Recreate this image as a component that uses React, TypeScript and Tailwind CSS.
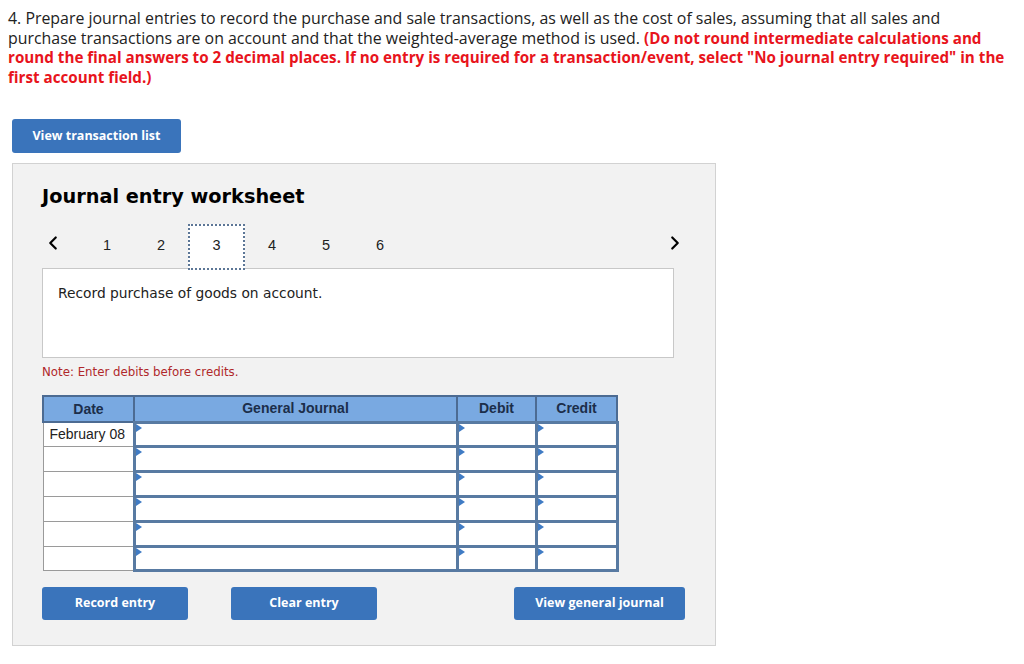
import { ChevronLeft, ChevronRight } from "lucide-react";

const steps = [1, 2, 3, 4, 5, 6];
const rows = ["February 08", "", "", "", "", ""];

function Cell({ w }: { w: string }) {
  return (
    <td className={`${w} relative border-[3px] border-[#587aa2] bg-white p-0`}>
      <span className="absolute left-0 top-0 h-0 w-0 border-y-[4px] border-l-[6px] border-y-transparent border-l-[#3f7bc4]" />
    </td>
  );
}

export default function App() {
  return (
    <div className="min-h-[664px] w-[1024px] bg-white pt-[9px] text-[#222]">
      <p className="whitespace-nowrap px-[8px] font-['Open_Sans',sans-serif] text-[15.9px] leading-[19.6px] text-[#222]">
        4. Prepare journal entries to record the purchase and sale transactions, as well as the cost of sales, assuming that all sales and
        <br />
        purchase transactions are on account and that the weighted-average method is used.{" "}
        <b className="text-[15.2px] font-bold text-[#e8141c]">(Do not round intermediate calculations and</b>
        <br />
        <b className="text-[15.2px] font-bold text-[#e8141c]">
          round the final answers to 2 decimal places. If no entry is required for a transaction/event, select "No journal entry required" in the
        </b>
        <br />
        <b className="text-[15.2px] font-bold text-[#e8141c]">first account field.)</b>
      </p>

      <div className="px-[12px] pt-[32px]">
        <button className="h-[34px] w-[169px] rounded-[3px] bg-[#3a74bb] font-['Open_Sans',sans-serif] text-[12.5px] font-bold text-white">
          View transaction list
        </button>

        <div className="mt-[10px] h-[483px] w-[704px] border border-[#d2d2d2] bg-[#f2f2f2] px-[29px] pt-[20px]">
          <h2 className="font-['DejaVu_Sans',sans-serif] text-[19.3px] font-bold leading-[26px] text-black">
            Journal entry worksheet
          </h2>

          <div className="mt-[14px] flex h-[46px] w-[632px] items-center font-['Liberation_Sans',sans-serif] text-[14.5px] text-[#222]">
            <ChevronLeft className="-mt-[8px] h-[22px] w-[22px] text-black" strokeWidth={2.4} />
            <div className="ml-[16px] flex">
              {steps.map((s) =>
                s === 3 ? (
                  <span
                    key={s}
                    className="relative z-10 flex h-[46px] w-[57px] items-center justify-center border-2 border-dotted border-[#5c7696] bg-white pb-[4px]"
                  >
                    {s}
                  </span>
                ) : (
                  <span key={s} className="flex h-[46px] w-[54px] items-center justify-center pb-[4px]">
                    {s}
                  </span>
                )
              )}
            </div>
            <ChevronRight className="-mt-[8px] ml-auto mr-[-12px] h-[22px] w-[22px] text-black" strokeWidth={2.4} />
          </div>

          <div className="-mt-[2px] h-[90px] w-[632px] border border-[#c8c8c8] bg-white px-[15px] pt-[14px] font-['DejaVu_Sans',sans-serif] text-[13.8px] text-[#222]">
            Record purchase of goods on account.
          </div>

          <p className="mt-[6px] font-['DejaVu_Sans',sans-serif] text-[11.8px] text-[#b0282a]">Note: Enter debits before credits.</p>

          <table className="mt-[13px] w-[574px] table-fixed border-collapse font-['Liberation_Sans',sans-serif] text-[14px]">
            <thead>
              <tr className="h-[26px] bg-[#79a9e1] font-bold text-[#1c2e4a]">
                <th className="w-[91px] border-2 border-[#4c6b92]">Date</th>
                <th className="w-[323px] border-2 border-[#4c6b92]">General Journal</th>
                <th className="w-[79px] border-2 border-[#4c6b92]">Debit</th>
                <th className="w-[81px] border-2 border-[#4c6b92]">Credit</th>
              </tr>
            </thead>
            <tbody>
              {rows.map((d, i) => (
                <tr key={i} className="h-[24.8px]">
                  <td className="border border-[#9a9a9a] bg-white pl-[6px] text-[14px] text-[#222]">{d}</td>
                  <Cell w="w-[323px]" />
                  <Cell w="w-[79px]" />
                  <Cell w="w-[81px]" />
                </tr>
              ))}
            </tbody>
          </table>

          <div className="mt-[15px] flex w-[643px] font-['Open_Sans',sans-serif] text-[12.5px] font-bold text-white">
            <button className="h-[33px] w-[146px] rounded-[3px] bg-[#3a74bb]">Record entry</button>
            <button className="ml-[43px] h-[33px] w-[146px] rounded-[3px] bg-[#3a74bb]">Clear entry</button>
            <button className="ml-auto h-[33px] w-[171px] rounded-[3px] bg-[#3a74bb]">View general journal</button>
          </div>
        </div>
      </div>
    </div>
  );
}
